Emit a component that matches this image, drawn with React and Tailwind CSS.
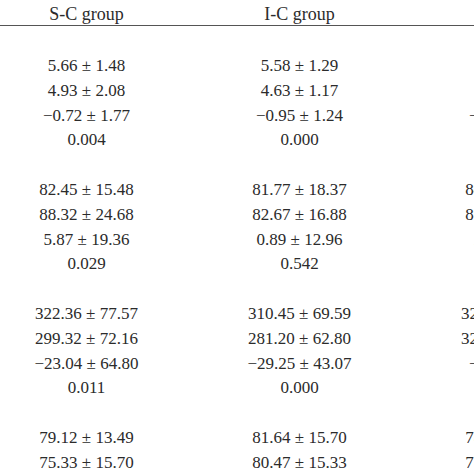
import React from 'react';

const columns = [
    {
        label: 'S-C group',
        groups: [
            ['5.66 ± 1.48', '4.93 ± 2.08', '−0.72 ± 1.77', '0.004'],
            ['82.45 ± 15.48', '88.32 ± 24.68', '5.87 ± 19.36', '0.029'],
            ['322.36 ± 77.57', '299.32 ± 72.16', '−23.04 ± 64.80', '0.011'],
            ['79.12 ± 13.49', '75.33 ± 15.70'],
        ],
    },
    {
        label: 'I-C group',
        groups: [
            ['5.58 ± 1.29', '4.63 ± 1.17', '−0.95 ± 1.24', '0.000'],
            ['81.77 ± 18.37', '82.67 ± 16.88', '0.89 ± 12.96', '0.542'],
            ['310.45 ± 69.59', '281.20 ± 62.80', '−29.25 ± 43.07', '0.000'],
            ['81.64 ± 15.70', '80.47 ± 15.33'],
        ],
    },
    {
        label: 'C group',
        groups: [
            ['5.61 ± 1.40', '5.02 ± 1.31', '−0.61 ± 1.35', '0.021'],
            ['84.12 ± 17.20', '85.33 ± 19.41', '2.21 ± 4.02', '0.310'],
            ['320.15 ± 70.22', '321.40 ± 68.10', '−3.12 ± 9.84', '0.420'],
            ['78.05 ± 14.26', '77.19 ± 13.82'],
        ],
    },
];

export default function App() {
    return (
        <div
            className="w-[474px] h-[474px] overflow-hidden bg-white text-[#2b2b2b] text-[17px]"
            style={{ fontFamily: '"Liberation Serif", "Times New Roman", serif' }}
        >
            {/* Header */}
            <div className="h-[26px] border-b border-[#555]">
                <div className="flex ml-[-20px] w-[700px]">
                    {columns.map((col) => (
                        <div key={col.label} className="w-[213px] shrink-0 text-center text-[18px] pt-[3px] leading-[22px]">
                            {col.label}
                        </div>
                    ))}
                </div>
            </div>

            {/* Body */}
            <div className="flex ml-[-20px] w-[700px] pt-[28px]">
                {columns.map((col) => (
                    <div key={col.label} className="w-[213px] shrink-0 text-center leading-[24.8px]">
                        {col.groups.map((group, gi) => (
                            <div key={gi} className="pb-[24.8px]">
                                {group.map((value, vi) => (
                                    <div key={vi} className="whitespace-nowrap">{value}</div>
                                ))}
                            </div>
                        ))}
                    </div>
                ))}
            </div>
        </div>
    );
}
